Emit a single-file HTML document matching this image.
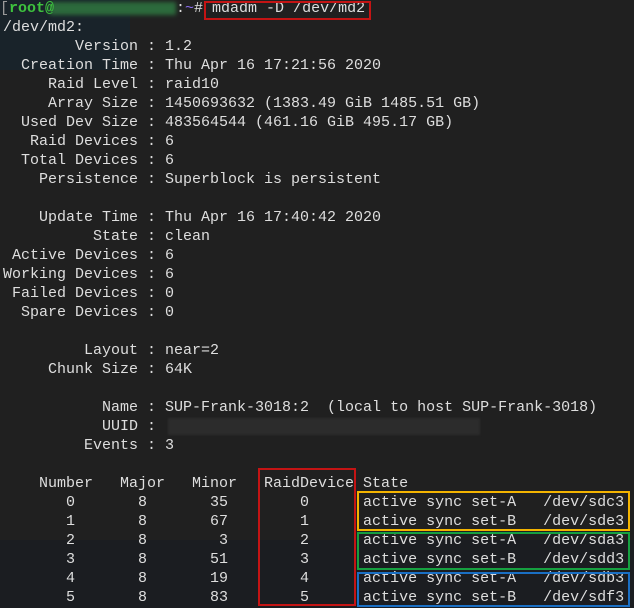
<!DOCTYPE html>
<html><head><meta charset="utf-8"><style>
html,body{margin:0;padding:0}
body{width:634px;height:608px;overflow:hidden;background:#202020;position:relative;font-family:"Liberation Mono","DejaVu Sans Mono",monospace;font-size:15px;color:#dedede}
.l{position:absolute;left:3px;height:19px;line-height:19px;white-space:pre}
.box{position:absolute;box-sizing:border-box}
</style></head><body>
<div style="position:absolute;left:0;top:0;width:130px;height:70px;background:#19232a"></div>
<div style="position:absolute;left:0;top:540px;width:634px;height:68px;background:#1b1d21"></div>
<div style="position:absolute;left:50px;top:2px;width:126px;height:13px;background:#2c6a3c;filter:blur(2px)"></div>
<div style="position:absolute;left:168px;top:418px;width:312px;height:17px;background:#2c2c2c;filter:blur(1px)"></div>

<div class="l" style="top:-1px;left:0"><span style="color:#999">[</span><span style="color:#3ec23e;font-weight:bold">root@</span></div>
<div class="l" style="top:-1px;left:176px"><span>:</span><span style="color:#8a6cf0">~</span><span>#</span> mdadm -D /dev/md2</div>
<div class="l" style="top:18px">/dev/md2:</div>
<div class="l" style="top:37px">        Version : 1.2</div>
<div class="l" style="top:56px">  Creation Time : Thu Apr 16 17:21:56 2020</div>
<div class="l" style="top:75px">     Raid Level : raid10</div>
<div class="l" style="top:94px">     Array Size : 1450693632 (1383.49 GiB 1485.51 GB)</div>
<div class="l" style="top:113px">  Used Dev Size : 483564544 (461.16 GiB 495.17 GB)</div>
<div class="l" style="top:132px">   Raid Devices : 6</div>
<div class="l" style="top:151px">  Total Devices : 6</div>
<div class="l" style="top:170px">    Persistence : Superblock is persistent</div>
<div class="l" style="top:208px">    Update Time : Thu Apr 16 17:40:42 2020</div>
<div class="l" style="top:227px">          State : clean</div>
<div class="l" style="top:246px"> Active Devices : 6</div>
<div class="l" style="top:265px">Working Devices : 6</div>
<div class="l" style="top:284px"> Failed Devices : 0</div>
<div class="l" style="top:303px">  Spare Devices : 0</div>
<div class="l" style="top:341px">         Layout : near=2</div>
<div class="l" style="top:360px">     Chunk Size : 64K</div>
<div class="l" style="top:398px">           Name : SUP-Frank-3018:2  (local to host SUP-Frank-3018)</div>
<div class="l" style="top:417px">           UUID : </div>
<div class="l" style="top:436px">         Events : 3</div>
<div class="l" style="top:474px">    Number   Major   Minor   RaidDevice State</div>
<div class="l" style="top:493px">       0       8       35        0      active sync set-A   /dev/sdc3</div>
<div class="l" style="top:512px">       1       8       67        1      active sync set-B   /dev/sde3</div>
<div class="l" style="top:531px">       2       8        3        2      active sync set-A   /dev/sda3</div>
<div class="l" style="top:550px">       3       8       51        3      active sync set-B   /dev/sdd3</div>
<div class="l" style="top:569px">       4       8       19        4      active sync set-A   /dev/sdb3</div>
<div class="l" style="top:588px">       5       8       83        5      active sync set-B   /dev/sdf3</div>

<div class="box" style="left:204px;top:1px;width:167px;height:19px;border:2px solid #c41414"></div>
<div class="box" style="left:258px;top:468px;width:98px;height:138px;border:2px solid #c41414"></div>
<div class="box" style="left:357px;top:491px;width:273px;height:40px;border:2px solid #f4b400"></div>
<div class="box" style="left:357px;top:532px;width:273px;height:38px;border:2px solid #16a040"></div>
<div class="box" style="left:357px;top:572px;width:273px;height:35px;border:2px solid #1a6fc4"></div>
</body></html>
